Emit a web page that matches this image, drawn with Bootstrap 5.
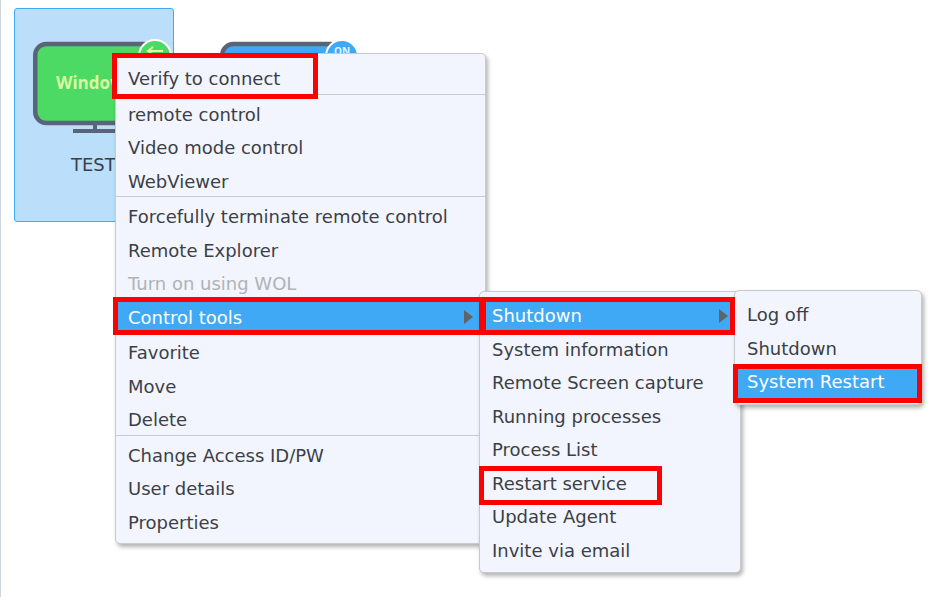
<!DOCTYPE html>
<html lang="en">
<head>
  <meta charset="UTF-8">
  <title>Agent list</title>
  <link href="https://cdn.jsdelivr.net/npm/bootstrap@5.3.0/dist/css/bootstrap.min.css" rel="stylesheet">
  <style>
    html, body { height: 100%; }
    body {
      background: #fff;
      font-family: "DejaVu Sans", Verdana, sans-serif;
      overflow: hidden;
    }
    .desk { position: relative; height: 597px; padding: 8px 0 0 14px; box-shadow: inset 1px 0 #cfd6dd; }
    .tile {
      width: 160px; height: 214px; border: 1px solid #3fa9f5; border-radius: 3px;
      background: #bbdffb; padding-top: 30px; color: #3c3f46; font-size: 18px;
    }
    .tile-plain { background: transparent; border-color: transparent; margin-left: 27px; }
    .tile svg { display: block; margin-left: 18px; }
    .tile-name { margin-top: 16px; padding-left: 56px; }
    .ctx-menu.dropdown-menu {
      --bs-dropdown-bg: #f2f5fd;
      --bs-dropdown-border-color: #c8cacd;
      --bs-dropdown-border-radius: 5px;
      --bs-dropdown-font-size: 18px;
      --bs-dropdown-color: #3c3f46;
      --bs-dropdown-link-color: #3c3f46;
      --bs-dropdown-link-hover-color: #3c3f46;
      --bs-dropdown-link-hover-bg: transparent;
      --bs-dropdown-link-active-color: #fff;
      --bs-dropdown-link-active-bg: #3fa9f5;
      --bs-dropdown-link-disabled-color: #b0b2b6;
      --bs-dropdown-divider-bg: #c8cacd;
      --bs-dropdown-item-padding-x: 12px;
      --bs-dropdown-item-padding-y: 0;
      --bs-dropdown-min-width: 0;
      position: absolute;
      margin: 0;
      padding: 7px 0 5px;
      box-shadow: 2px 3px 4px rgba(0, 0, 0, .3);
    }
    .ctx-menu .dropdown-item {
      display: flex; align-items: center; justify-content: space-between;
      height: 33.5px; line-height: 33.5px;
    }
    .ctx-menu .dropdown-divider { margin: -2px 0 3px; opacity: 1; }
    .menu-main { left: 115px; top: 53px; width: 371px; padding: 8px 0 4px !important; }
    .menu-main .active { margin-bottom: 2px; }
    .menu-tools { left: 479px; top: 291px; width: 262px; z-index: 1001; }
    .menu-shutdown { left: 734px; top: 290px; width: 188px; z-index: 1002; }
    .menu-shutdown .active { border-bottom: 1px solid #3a6ea5; }
    .sub-arrow { width: 0; height: 0; border-left: 9px solid #5f6468; border-top: 7px solid transparent; border-bottom: 7px solid transparent; }
    .red-box { position: absolute; border: 5px solid #fe0000; z-index: 1010; pointer-events: none; }
    .rb-verify { left: 112px; top: 53px; width: 206px; height: 46px; }
    .rb-control { left: 113px; top: 297px; width: 373px; height: 38px; }
    .rb-shutdown { left: 479px; top: 297px; width: 256px; height: 38px; }
    .rb-restart { left: 733px; top: 364px; width: 189px; height: 39px; }
    .rb-service { left: 479px; top: 466px; width: 183px; height: 39px; }
  </style>
</head>
<body>
  <div class="desk">
    <div class="d-flex">
      <div class="tile">
        <svg width="142" height="96" viewBox="0 0 142 96">
          <rect x="2.25" y="5" width="119.5" height="79" rx="11" fill="#4cd964" stroke="#5a6478" stroke-width="4.5"/>
          <path d="M62 86v5M40 92h44" stroke="#5a6478" stroke-width="4"/>
          <text x="23" y="50" font-family="Open Sans" font-size="17" font-weight="700" fill="#d9ffa0">Windows</text>
          <circle cx="122" cy="17" r="16" fill="#4cd964" stroke="#fff" stroke-width="2"/>
          <path d="M130 12h-15M120 8l-5 4 5 4" fill="none" stroke="#d9ffa0" stroke-width="2"/>
        </svg>
        <div class="tile-name">TEST</div>
      </div>
      <div class="tile tile-plain">
        <svg width="142" height="96" viewBox="0 0 142 96">
          <rect x="2.25" y="5" width="119.5" height="79" rx="11" fill="#3fa9f5" stroke="#5a6478" stroke-width="4.5"/>
          <circle cx="122" cy="17" r="16" fill="#3fa9f5" stroke="#fff" stroke-width="2"/>
          <text x="122" y="16" text-anchor="middle" font-family="Open Sans" font-size="10" font-weight="700" fill="#e6f4ff">ON</text>
        </svg>
      </div>
    </div>

    <ul class="dropdown-menu show ctx-menu menu-main">
      <li><a class="dropdown-item" href="#">Verify to connect</a></li>
      <li><hr class="dropdown-divider"></li>
      <li><a class="dropdown-item" href="#">remote control</a></li>
      <li><a class="dropdown-item" href="#">Video mode control</a></li>
      <li><a class="dropdown-item" href="#">WebViewer</a></li>
      <li><hr class="dropdown-divider"></li>
      <li><a class="dropdown-item" href="#">Forcefully terminate remote control</a></li>
      <li><a class="dropdown-item" href="#">Remote Explorer</a></li>
      <li><a class="dropdown-item disabled" href="#">Turn on using WOL</a></li>
      <li><a class="dropdown-item active" href="#">Control tools<span class="sub-arrow"></span></a></li>
      <li><a class="dropdown-item" href="#">Favorite</a></li>
      <li><a class="dropdown-item" href="#">Move</a></li>
      <li><a class="dropdown-item" href="#">Delete</a></li>
      <li><hr class="dropdown-divider"></li>
      <li><a class="dropdown-item" href="#">Change Access ID/PW</a></li>
      <li><a class="dropdown-item" href="#">User details</a></li>
      <li><a class="dropdown-item" href="#">Properties</a></li>
    </ul>

    <ul class="dropdown-menu show ctx-menu menu-tools">
      <li><a class="dropdown-item active" href="#">Shutdown<span class="sub-arrow"></span></a></li>
      <li><a class="dropdown-item" href="#">System information</a></li>
      <li><a class="dropdown-item" href="#">Remote Screen capture</a></li>
      <li><a class="dropdown-item" href="#">Running processes</a></li>
      <li><a class="dropdown-item" href="#">Process List</a></li>
      <li><a class="dropdown-item" href="#">Restart service</a></li>
      <li><a class="dropdown-item" href="#">Update Agent</a></li>
      <li><a class="dropdown-item" href="#">Invite via email</a></li>
    </ul>

    <ul class="dropdown-menu show ctx-menu menu-shutdown">
      <li><a class="dropdown-item" href="#">Log off</a></li>
      <li><a class="dropdown-item" href="#">Shutdown</a></li>
      <li><a class="dropdown-item active" href="#">System Restart</a></li>
    </ul>

    <div class="red-box rb-verify"></div>
    <div class="red-box rb-control"></div>
    <div class="red-box rb-shutdown"></div>
    <div class="red-box rb-restart"></div>
    <div class="red-box rb-service"></div>
  </div>
</body>
</html>
